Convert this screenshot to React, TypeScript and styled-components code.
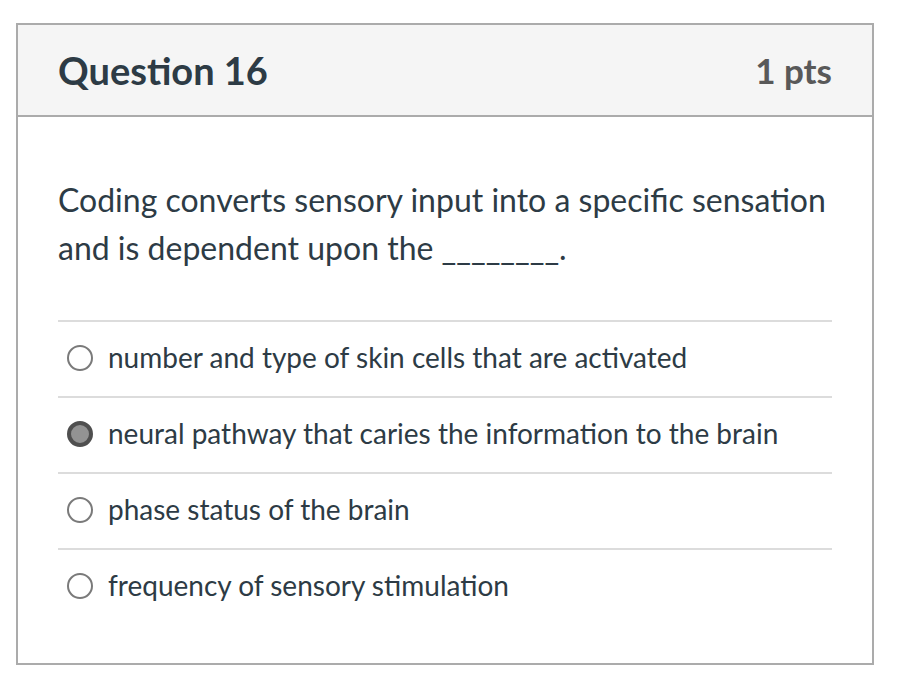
import React from "react";
import styled, { createGlobalStyle } from "styled-components";

const Global = createGlobalStyle`
  html, body { margin: 0; padding: 0; background: #fff; }
  body { font-family: Lato, "Open Sans", sans-serif; color: #2d3b45; }
`;

const Page = styled.div`
  padding: 23px 0 0 16px;
`;

const Card = styled.div`
  width: 858px;
  height: 642px;
  box-sizing: border-box;
  border: 2px solid #ababab;
  display: flex;
  flex-direction: column;
`;

const Header = styled.div`
  height: 90px;
  background: #f5f5f5;
  border-bottom: 2px solid #ababab;
  display: flex;
  align-items: center;
  justify-content: space-between;
  padding: 0 40px;
`;

const Title = styled.h2`
  margin: 0;
  font-size: 38px;
  font-weight: 700;
  color: #2d3b45;
`;

const Points = styled.div`
  font-size: 35px;
  font-weight: 700;
  color: #595959;
`;

const Body = styled.div`
  padding: 59px 40px 0;
`;

const Prompt = styled.p`
  margin: 0 0 48px;
  font-size: 32px;
  line-height: 48px;
`;

const Answer = styled.label`
  display: flex;
  align-items: center;
  height: 76px;
  box-sizing: border-box;
  border-top: 2px solid #dcdcdc;
  font-size: 28px;
  gap: 15px;
  padding-left: 9px;
  padding-bottom: 5px;
`;

const Radio = styled.span<{ $checked?: boolean }>`
  width: 26px;
  height: 26px;
  box-sizing: border-box;
  border-radius: 50%;
  flex: none;
  margin-top: 3px;
  border: ${(p) => (p.$checked ? "4px solid #4f4f4f" : "2px solid #7a7a7a")};
  background: ${(p) => (p.$checked ? "#939393" : "#fff")};
`;

const answers = [
  "number and type of skin cells that are activated",
  "neural pathway that caries the information to the brain",
  "phase status of the brain",
  "frequency of sensory stimulation",
];

export default function App() {
  return (
    <>
      <Global />
      <Page>
        <Card>
          <Header>
            <Title>Question 16</Title>
            <Points>1 pts</Points>
          </Header>
          <Body>
            <Prompt>
              Coding converts sensory input into a specific sensation and is
              dependent upon the ________.
            </Prompt>
            {answers.map((a, i) => (
              <Answer key={a}>
                <Radio $checked={i === 1} />
                {a}
              </Answer>
            ))}
          </Body>
        </Card>
      </Page>
    </>
  );
}
